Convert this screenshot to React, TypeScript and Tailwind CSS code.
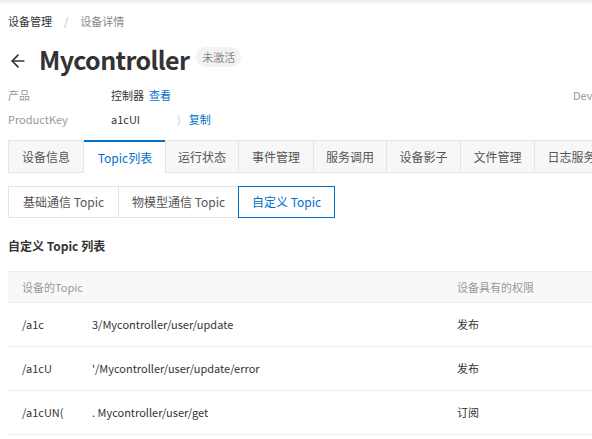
import { ArrowLeft } from "lucide-react";

const tabs = [
  { label: "设备信息", w: "w-[76px]" },
  { label: "Topic列表", w: "w-[82px]", active: true },
  { label: "运行状态", w: "w-[74px]" },
  { label: "事件管理", w: "w-[76px]" },
  { label: "服务调用", w: "w-[74px]" },
  { label: "设备影子", w: "w-[75px]" },
  { label: "文件管理", w: "w-[75px]" },
  { label: "日志服务", w: "w-[75px]" },
];

const subTabs = [
  { label: "基础通信 Topic", w: "w-[111px]" },
  { label: "物模型通信 Topic", w: "w-[121px]" },
  { label: "自定义 Topic", w: "w-[97px]", active: true },
];

const rows = [
  { head: "/a1c", tail: "3/Mycontroller/user/update", perm: "发布" },
  { head: "/a1cU", tail: "'/Mycontroller/user/update/error", perm: "发布" },
  { head: "/a1cUN(", tail: ". Mycontroller/user/get", perm: "订阅" },
];

export default function App() {
  return (
    <div
      className="w-[592px] h-[439px] overflow-hidden bg-white text-[#333] text-[12px]"
      style={{ fontFamily: '"Noto Sans CJK SC", "Noto Sans", sans-serif' }}
    >
      <div className="h-[5px] bg-gradient-to-b from-[#ececec] to-white" />

      <div className="pl-2">
        {/* breadcrumb */}
        <div className="h-[32px] flex items-center gap-3 pt-[1px] text-[11px]">
          <span className="text-[#333]">设备管理</span>
          <span className="text-[#bbb]">/</span>
          <span className="text-[#888]">设备详情</span>
        </div>

        {/* title */}
        <div className="h-[47px] flex items-center">
          <ArrowLeft size={20} strokeWidth={2} className="text-[#333] mr-[11px] mt-[1px]" />
          <h1 className="text-[25px] font-bold text-[#333] leading-none tracking-[-0.6px] mt-[-2px]">Mycontroller</h1>
          <span className="ml-[7px] mt-[-7px] h-[20px] px-[6px] rounded-full bg-[#f2f2f2] text-[#888] text-[11px] flex items-center">
            未激活
          </span>
        </div>

        {/* info */}
        <div className="h-[23px] flex items-center">
          <span className="w-[103px] text-[#999] text-[11px]">产品</span>
          <span className="text-[11px]">控制器</span>
          <span className="ml-[5px] text-[11px] text-[#0070cc]">查看</span>
          <span className="ml-auto text-[11px] text-[#999] w-[19px] overflow-hidden whitespace-nowrap">Device</span>
        </div>
        <div className="h-[24px] flex items-center">
          <span className="w-[103px] text-[#999] text-[11px]">ProductKey</span>
          <span className="text-[11px] w-[28px]">a1cUI</span>
          <span className="ml-[38px] text-[11px] text-[#ccc]">)</span>
          <span className="ml-[8px] text-[11px] text-[#0070cc]">复制</span>
        </div>

        {/* tabs */}
        <div className="mt-[9px] flex h-[33px] whitespace-nowrap">
          {tabs.map((t) =>
            t.active ? (
              <div
                key={t.label}
                className={`${t.w} shrink-0 flex items-center justify-center bg-white border-t-2 border-[#0070cc] text-[#0070cc] text-[12px]`}
              >
                {t.label}
              </div>
            ) : (
              <div
                key={t.label}
                className={`${t.w} shrink-0 flex items-center justify-center bg-[#f7f7f7] border border-[#e4e4e4] -ml-px first:ml-0 text-[#555] text-[12px]`}
              >
                {t.label}
              </div>
            )
          )}
        </div>

        {/* sub tabs */}
        <div className="mt-[13px] flex h-[32px]">
          {subTabs.map((t) => (
            <div
              key={t.label}
              className={`${t.w} shrink-0 flex items-center justify-center text-[12px] border ${
                t.active ? "border-[#0070cc] text-[#0070cc] -ml-px" : "border-[#e4e4e4] text-[#555] -ml-px first:ml-0"
              }`}
            >
              {t.label}
            </div>
          ))}
        </div>

        {/* section title */}
        <div className="mt-[17px] h-[22px] flex items-center font-bold text-[12px] text-[#333]">
          自定义 Topic 列表
        </div>

        {/* table */}
        <div className="mt-[14px] w-[600px]">
          <div className="h-[32px] flex items-center bg-[#f8f8f8] border-t border-b border-[#ececec] text-[#999] text-[11px]">
            <span className="pl-[14px] w-[449px]">设备的Topic</span>
            <span>设备具有的权限</span>
          </div>
          {rows.map((r) => (
            <div key={r.tail} className="h-[44px] flex items-center border-b border-[#ececec] text-[11px] text-[#333]">
              <div className="pl-[14px] w-[449px] flex">
                <span className="w-[70px]">{r.head}</span>
                <span>{r.tail}</span>
              </div>
              <span>{r.perm}</span>
            </div>
          ))}
        </div>
      </div>
    </div>
  );
}
